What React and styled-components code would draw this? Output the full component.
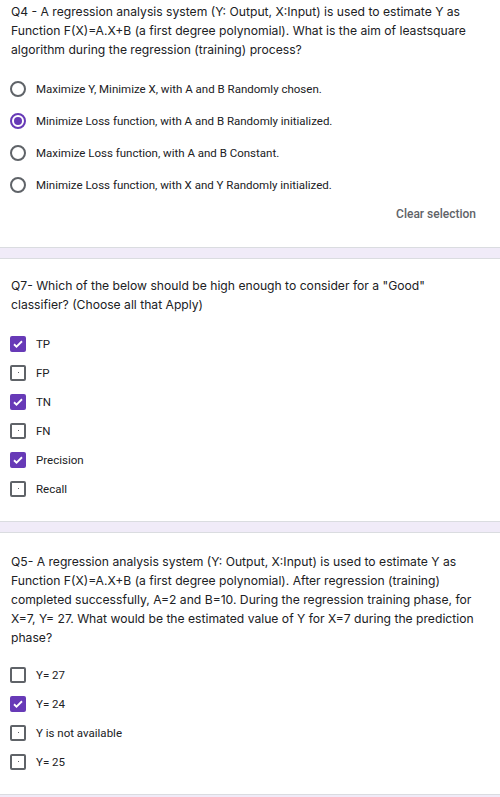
import React from 'react';
import styled, { createGlobalStyle } from 'styled-components';

const GlobalStyle = createGlobalStyle`
  html, body {
    margin: 0;
    padding: 0;
    background: #f0ebf8;
  }
  * { box-sizing: border-box; }
`;

const Page = styled.div`
  display: flex;
  flex-direction: column;
  gap: 10px;
  width: 500px;
  background: #f0ebf8;
`;

const Card = styled.section`
  display: flex;
  flex-direction: column;
  background: #ffffff;
  border-top: ${(p) => (p.$first ? 'none' : '1px solid #dadce0')};
  border-bottom: 1px solid #dadce0;
  padding: ${(p) => p.$pad};
`;

const Question = styled.div`
  font-family: Inter, 'Open Sans', sans-serif;
  font-size: 12.15px;
  line-height: 19px;
  color: #202124;
  padding: 0 11px;
  white-space: nowrap;
  margin-bottom: ${(p) => p.$gap}px;
`;

const Options = styled.div`
  display: flex;
  flex-direction: column;
`;

const Option = styled.label`
  display: flex;
  align-items: center;
  gap: 10px;
  height: ${(p) => p.$h}px;
  padding-left: 10px;
  font-family: Roboto, 'Liberation Sans', sans-serif;
  font-size: 11.5px;
  color: #202124;
`;

const Radio = styled.span`
  position: relative;
  width: 16px;
  height: 16px;
  border-radius: 50%;
  border: 2px solid ${(p) => (p.$on ? '#673ab7' : '#5f6368')};
  flex-shrink: 0;
  &::after {
    content: '';
    display: ${(p) => (p.$on ? 'block' : 'none')};
    position: absolute;
    left: 2px;
    top: 2px;
    width: 8px;
    height: 8px;
    border-radius: 50%;
    background: #673ab7;
  }
`;

const Box = styled.span`
  display: flex;
  align-items: center;
  justify-content: center;
  width: 16px;
  height: 16px;
  border-radius: 2px;
  flex-shrink: 0;
  background: ${(p) => (p.$on ? '#673ab7' : '#fff')};
  border: 2px solid ${(p) => (p.$on ? '#673ab7' : '#5f6368')};
  &::after {
    content: '';
    display: ${(p) => (p.$dot ? 'block' : 'none')};
    width: 1px;
    height: 1px;
    background: #5f6368;
  }
`;

const Footer = styled.div`
  display: flex;
  justify-content: flex-end;
  padding: 5px 24px 0 0;
  font-family: Roboto, 'Liberation Sans', sans-serif;
  font-size: 12px;
  line-height: 16px;
  font-weight: 500;
  color: #5f6368;
`;

const Check = () => (
  <svg width="12" height="12" viewBox="0 0 24 24">
    <path d="M4 12.5l5 5L20 6.5" fill="none" stroke="#fff" strokeWidth="3.6" />
  </svg>
);

const q4 = [
  'Maximize Y, Minimize X, with A and B Randomly chosen.',
  'Minimize Loss function, with A and B Randomly initialized.',
  'Maximize Loss function, with A and B Constant.',
  'Minimize Loss function, with X and Y Randomly initialized.',
];

const q7 = [
  { t: 'TP', on: true },
  { t: 'FP', dot: true },
  { t: 'TN', on: true },
  { t: 'FN', dot: true },
  { t: 'Precision', on: true },
  { t: 'Recall', dot: true },
];

const q5 = [
  { t: 'Y= 27' },
  { t: 'Y= 24', on: true },
  { t: 'Y is not available', dot: true },
  { t: 'Y= 25', dot: true },
];

function CheckList({ items }) {
  return (
    <Options>
      {items.map((it) => (
        <Option $h={29} key={it.t}>
          <Box $on={it.on} $dot={it.dot}>{it.on && <Check />}</Box>
          {it.t}
        </Option>
      ))}
    </Options>
  );
}

export default function App() {
  return (
    <Page>
      <GlobalStyle />
      <Card $first $pad="2px 0 25px">
        <Question $gap={14}>
          Q4 - A regression analysis system (Y: Output, X:Input) is used to estimate Y as<br />
          Function F(X)=A.X+B (a first degree polynomial). What is the aim of leastsquare<br />
          algorithm during the regression (training) process?
        </Question>
        <Options>
          {q4.map((t, i) => (
            <Option $h={32} key={t}>
              <Radio $on={i === 1} />
              {t}
            </Option>
          ))}
        </Options>
        <Footer>Clear selection</Footer>
      </Card>
      <Card $pad="17px 0 18px">
        <Question $gap={15}>
          Q7- Which of the below should be high enough to consider for a "Good"<br />
          classifier? (Choose all that Apply)
        </Question>
        <CheckList items={q7} />
      </Card>
      <Card $pad="19px 0 18px">
        <Question $gap={13}>
          Q5- A regression analysis system (Y: Output, X:Input) is used to estimate Y as<br />
          Function F(X)=A.X+B (a first degree polynomial). After regression (training)<br />
          completed successfully, A=2 and B=10. During the regression training phase, for<br />
          X=7, Y= 27. What would be the estimated value of Y for X=7 during the prediction<br />
          phase?
        </Question>
        <CheckList items={q5} />
      </Card>
    </Page>
  );
}
